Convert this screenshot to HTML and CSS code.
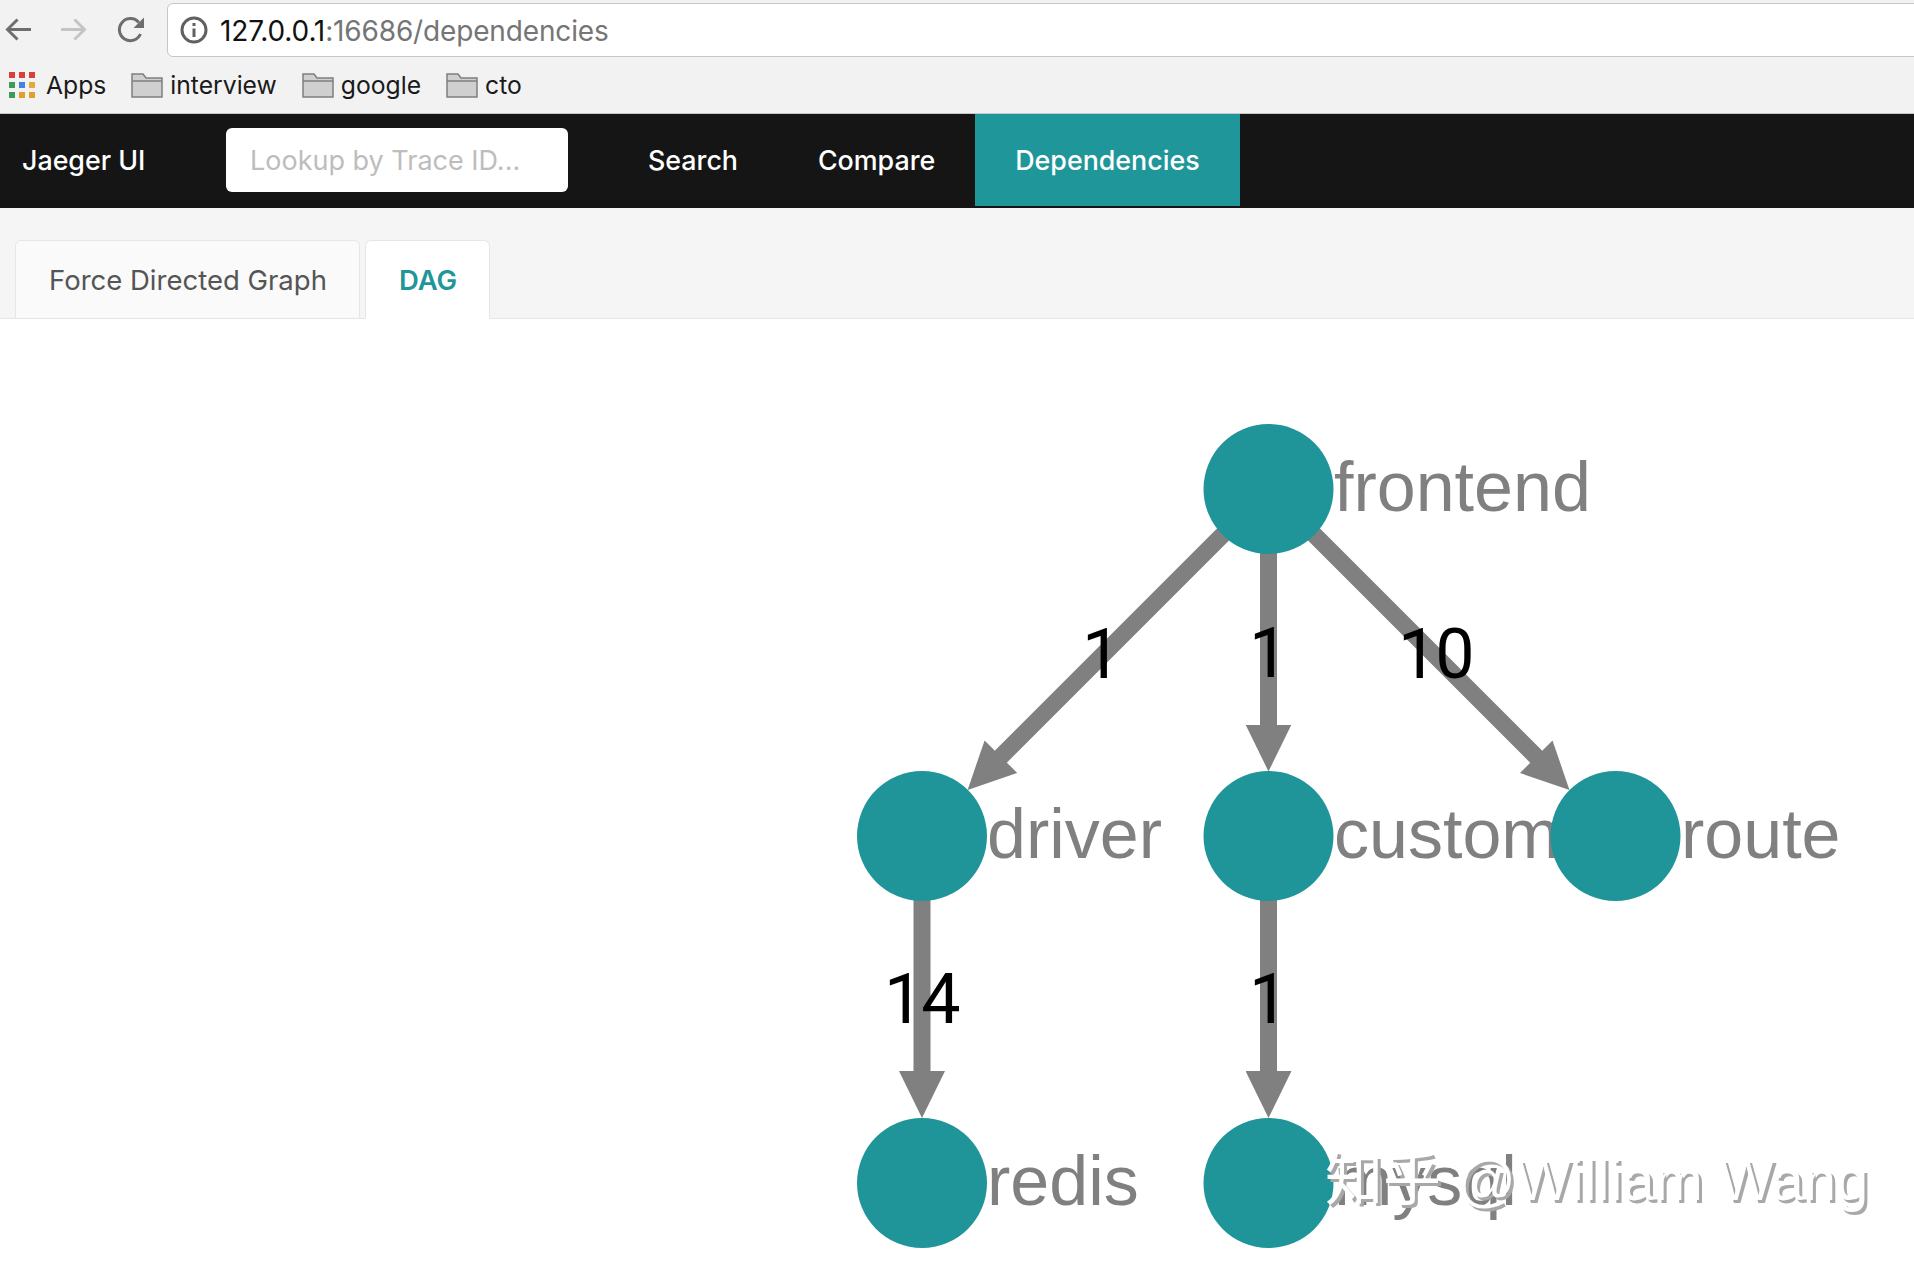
FILE: index.html
```html
<!DOCTYPE html>
<html lang="en">
<head>
<meta charset="utf-8">
<title>Jaeger UI</title>
<link rel="stylesheet" href="styles.css">
</head>
<body>
<div class="browser-toolbar">
  <svg class="tool-icon back" viewBox="0 0 28 26"><path d="M27 13H3M13 2.500 2.500 13 13 23.500"/></svg>
  <svg class="tool-icon forward" viewBox="0 0 28 26"><path d="M1 13H25M15 2.500 25.500 13 15 23.500"/></svg>
  <svg class="tool-icon reload" viewBox="0 0 28 28"><path d="M23.500 18A11 11 0 1 1 21.800 6.500"/><path class="solid" d="M27 1.500V12H16.500Z"/></svg>
  <div class="address">
    <svg class="info" viewBox="0 0 28 28"><circle cx="14" cy="14" r="12"/><path d="M14 12.500V21"/><path d="M14 7V10"/></svg>
    <span class="url"><span class="host">127.0.0.1</span>:16686/dependencies</span>
  </div>
</div>
<div class="bookmarks">
  <div class="bookmark apps-mark">
    <svg class="apps" viewBox="0 0 27 27">
      <rect x="0" y="0" width="6" height="6" fill="#d9403c"/><rect x="10" y="0" width="6" height="6" fill="#d9403c"/><rect x="20" y="0" width="6" height="6" fill="#d9403c"/>
      <rect x="0" y="10" width="6" height="6" fill="#3c9a5a"/><rect x="10" y="10" width="6" height="6" fill="#3f83e6"/><rect x="20" y="10" width="6" height="6" fill="#e8a93a"/>
      <rect x="0" y="20" width="6" height="6" fill="#3c9a5a"/><rect x="10" y="20" width="6" height="6" fill="#e0a02f"/><rect x="20" y="20" width="6" height="6" fill="#e0a02f"/>
    </svg>
    <span>Apps</span>
  </div>
  <div class="bookmark">
    <svg class="folder" viewBox="0 0 32 26"><path d="M1 25V2h11l3 4h16v19z"/><path class="fold" d="M1 9h30"/></svg>
    <span>interview</span>
  </div>
  <div class="bookmark">
    <svg class="folder" viewBox="0 0 32 26"><path d="M1 25V2h11l3 4h16v19z"/><path class="fold" d="M1 9h30"/></svg>
    <span>google</span>
  </div>
  <div class="bookmark">
    <svg class="folder" viewBox="0 0 32 26"><path d="M1 25V2h11l3 4h16v19z"/><path class="fold" d="M1 9h30"/></svg>
    <span>cto</span>
  </div>
</div>
<nav class="topnav">
  <a class="brand">Jaeger UI</a>
  <input class="lookup" type="text" placeholder="Lookup by Trace ID...">
  <a class="nav-item">Search</a>
  <a class="nav-item">Compare</a>
  <a class="nav-item active">Dependencies</a>
</nav>
<div class="tabs">
  <div class="tab">Force Directed Graph</div>
  <div class="tab selected">DAG</div>
</div>
<main class="canvas">
  <svg class="dag" viewBox="0 0 1914 951" width="1914" height="951">
    <defs>
      <marker id="head" markerUnits="userSpaceOnUse" markerWidth="47" markerHeight="46" refX="22" refY="23" orient="auto">
        <path d="M0 0L47 23L0 46Z" fill="#808080"/>
      </marker>
    </defs>
    <g class="edges">
      <line x1="1268.500" y1="170" x2="985.300" y2="453.200" marker-end="url(#head)"/>
      <line x1="1268.500" y1="170" x2="1268.500" y2="427.500" marker-end="url(#head)"/>
      <line x1="1268.500" y1="170" x2="1551.800" y2="453.300" marker-end="url(#head)"/>
      <line x1="922" y1="517" x2="922" y2="774" marker-end="url(#head)"/>
      <line x1="1268.500" y1="517" x2="1268.500" y2="774" marker-end="url(#head)"/>
    </g>
    <g class="node-labels">
      <text x="1334" y="192">frontend</text>
      <text x="987" y="539">driver</text>
      <text x="1334" y="539">customer</text>
      <text x="1681" y="539">route</text>
      <text x="987" y="886">redis</text>
      <text x="1334" y="886">mysql</text>
    </g>
    <g class="nodes">
      <circle cx="1268.500" cy="170" r="65"/>
      <circle cx="922" cy="517" r="65"/>
      <circle cx="1268.500" cy="517" r="65"/>
      <circle cx="1615.500" cy="517" r="65"/>
      <circle cx="922" cy="864" r="65"/>
      <circle cx="1268.500" cy="864" r="65"/>
    </g>
    <g class="edge-labels">
      <text x="1082" y="359">1</text>
      <text x="1249" y="358">1</text>
      <text x="1398" y="359">10</text>
      <text x="884" y="704">14</text>
      <text x="1249" y="704">1</text>
    </g>
  </svg>
  <span class="watermark">知乎 @William Wang</span>
</main>
</body>
</html>
```

FILE: styles.css
```css
* { box-sizing: border-box; }
html, body { margin: 0; padding: 0; }
body {
  width: 1914px;
  height: 1270px;
  overflow: hidden;
  background: #fff;
  font-family: Inter, "Liberation Sans", sans-serif;
}
.browser-toolbar {
  height: 57px;
  background: #f2f2f2;
  display: flex;
  align-items: center;
  padding: 2px 0 0 5px;
}
.tool-icon { fill: none; stroke: #6e6e6e; stroke-width: 3; flex: none; }
.tool-icon .solid { fill: #6e6e6e; stroke: none; }
.back { width: 27px; height: 25px; margin-right: 28px; }
.forward { width: 27px; height: 25px; margin-right: 30px; stroke: #c4c4c4; }
.reload { width: 28px; height: 28px; margin-right: 22px; }
.address {
  flex: none;
  width: 1800px;
  height: 54px;
  background: #fff;
  border: 1px solid #c6c6c6;
  border-radius: 6px;
  display: flex;
  align-items: center;
  padding-left: 12px;
  gap: 12px;
}
.info { width: 28px; height: 28px; fill: none; stroke: #606060; stroke-width: 3; }
.url { font-size: 28px; line-height: 30px; padding-top: 2px; color: #757575; letter-spacing: -0.15px; }
.host { color: #111; }
.bookmarks {
  height: 57px;
  background: #f2f2f2;
  border-bottom: 1px solid #c8c8c8;
  display: flex;
  align-items: center;
  padding-left: 9px;
  font-size: 24.700px;
  color: #1a1a1a;
}
.bookmark { display: flex; align-items: center; gap: 7px; margin-right: 25px; }
.apps-mark { gap: 10px; margin-right: 25px; }
.apps { width: 27px; height: 27px; }
.folder { width: 32px; height: 26px; fill: #cfcfcf; stroke: #7f7f7f; stroke-width: 1.500; }
.folder .fold { fill: none; }
.topnav {
  height: 94px;
  background: #151515;
  display: flex;
  align-items: flex-start;
  color: #fff;
  font-size: 26.800px;
  font-weight: 500;
}
.brand { width: 226px; padding-left: 22px; line-height: 92px; }
.lookup {
  width: 342px;
  height: 64px;
  margin: 14px 40px 0 0;
  border: 0;
  border-radius: 6px;
  padding: 0 24px;
  background: #fff;
  font: inherit;
  font-size: 27px;
  font-weight: 400;
  color: #333;
}
.lookup::placeholder { color: #bdbdbd; opacity: 1; }
.nav-item { padding: 0 40px; line-height: 92px; height: 92px; }
.nav-item.active { background: #1f9699; }
.tabs {
  height: 111px;
  background: #f5f5f5;
  border-bottom: 1px solid #e6e6e6;
  display: flex;
  align-items: flex-end;
  padding-left: 15px;
  gap: 5px;
  font-size: 27.500px;
  color: #555;
}
.tab {
  height: 79px;
  margin-bottom: -1px;
  padding: 0 32px 0 33px;
  line-height: 79px;
  background: #fafafa;
  border: 1px solid #e6e6e6;
  border-radius: 6px 6px 0 0;
}
.tab.selected {
  background: #fff;
  border-bottom-color: #fff;
  color: #1f9699;
  font-weight: 600;
}
.canvas { position: relative; height: 951px; }
.dag { display: block; }
.edges line { stroke: #808080; stroke-width: 17; }
.nodes circle { fill: #1f9499; }
.node-labels text { font-family: "Liberation Sans", sans-serif; font-size: 70px; fill: #808080; }
.edge-labels text { font-family: Roboto, "Liberation Sans", sans-serif; font-size: 70px; letter-spacing: -2px; fill: #000; }
.watermark {
  position: absolute;
  left: 1325px;
  top: 826px;
  font-family: "Liberation Sans", "Noto Sans CJK SC", sans-serif;
  font-size: 58px;
  line-height: 70px;
  white-space: nowrap;
  color: #fff;
  text-shadow: 3px 3px 0 #a8a8a8;
}
```
